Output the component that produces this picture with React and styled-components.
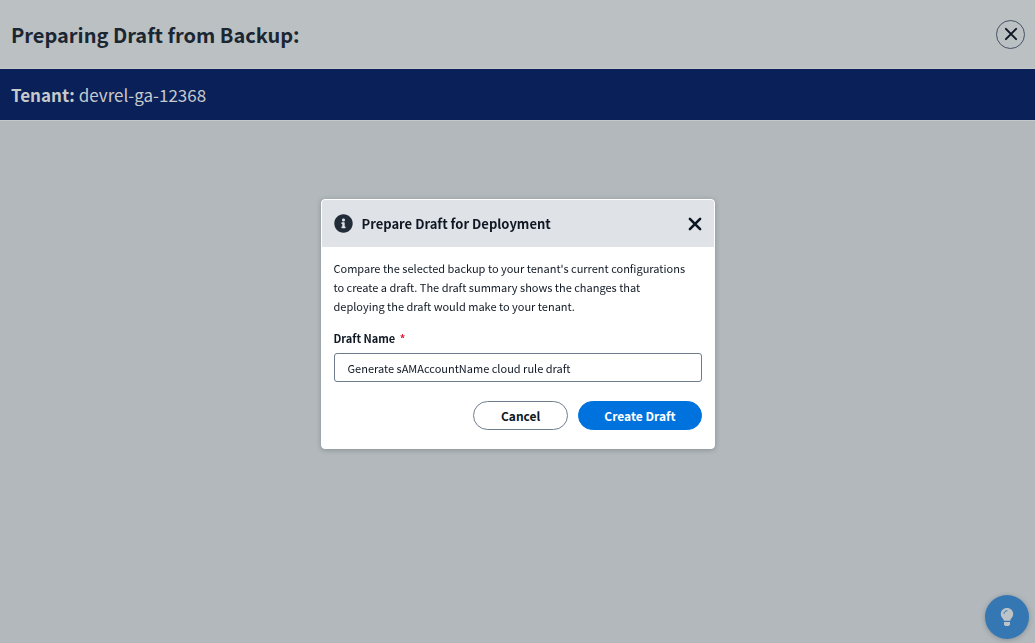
import React, { useState } from "react";
import styled, { createGlobalStyle } from "styled-components";
import { FaInfoCircle } from "react-icons/fa";

const __INK = "#0e1722";
const __NAVY = "#0a2058";
const __BLUE = "#0072de";
const __SLATE = "#6f7c8e";
const __PAGE = "#b2b8bb";
const __TOP = "#bbc0c3";

const GlobalStyle = createGlobalStyle`
  * {
    box-sizing: border-box;
  }
  body {
    margin: 0;
    background: ${__PAGE};
    color: ${__INK};
    font-family: "Noto Sans CJK SC", "Noto Sans", sans-serif;
    font-size: 11px;
  }
  button,
  input {
    font: inherit;
    color: inherit;
  }
`;

const TopBar = styled.header`
  display: flex;
  align-items: center;
  justify-content: space-between;
  height: 69px;
  padding: 0 10px 0 11px;
  background: ${__TOP};
  border-bottom: 1px solid #c4c8c8;
`;

const PageTitle = styled.h1`
  margin: 0;
  padding-top: 1px;
  font-size: 20px;
  line-height: 28px;
  font-weight: 700;
  color: #1a2632;
`;

const RoundButton = styled.button`
  display: flex;
  align-items: center;
  justify-content: center;
  width: 29px;
  height: 29px;
  padding: 0;
  border: 1px solid #465364;
  border-radius: 50%;
  background: transparent;
  cursor: pointer;
`;

const TenantBar = styled.div`
  display: flex;
  align-items: center;
  gap: 4px;
  height: 52px;
  padding: 1px 11px 0;
  background: ${__NAVY};
  border-bottom: 1px solid #c4c8c8;
  color: #c6cacb;
  font-size: 17px;
  line-height: 24px;
`;

const Overlay = styled.div`
  position: fixed;
  inset: 0;
  display: flex;
  align-items: center;
  justify-content: center;
  padding: 5px 16px 0;
`;

const Dialog = styled.section`
  width: 100%;
  max-width: 394px;
  overflow: hidden;
  border: 1px solid #ffffff;
  border-radius: 4px;
  background: #ffffff;
  box-shadow: 0 1px 5px rgba(40, 50, 60, 0.3);
`;

const DialogHeader = styled.div`
  display: flex;
  align-items: center;
  height: 47px;
  padding: 0 12px;
  background: #dfe2e7;
`;

const DialogTitle = styled.h2`
  flex: 1;
  margin: 0 0 0 9px;
  font-size: 13px;
  line-height: 20px;
  font-weight: 700;
`;

const IconButton = styled.button`
  display: flex;
  padding: 0;
  border: 0;
  background: transparent;
  cursor: pointer;
`;

const DialogForm = styled.form`
  padding: 12px 12px 18px;
`;

const Message = styled.p`
  margin: 0 0 13px;
  padding-right: 8px;
  line-height: 19px;
`;

const Label = styled.label`
  display: block;
  margin-bottom: 5px;
  line-height: 19px;
  font-weight: 700;
`;

const Required = styled.span`
  margin-left: 2px;
  color: #e0203a;
`;

const TextInput = styled.input`
  display: block;
  width: 100%;
  height: 29px;
  padding: 0 13px;
  border: 1px solid ${__SLATE};
  border-radius: 3px;
  background: #ffffff;
`;

const Actions = styled.div`
  display: flex;
  justify-content: flex-end;
  gap: 10px;
  margin-top: 19px;
`;

const PillButton = styled.button`
  height: 29px;
  padding: 0 ${props => (props.$primary ? 25 : 27)}px;
  border: 1px solid ${props => (props.$primary ? __BLUE : __SLATE)};
  border-radius: 15px;
  background: ${props => (props.$primary ? __BLUE : "#ffffff")};
  color: ${props => (props.$primary ? "#ffffff" : __INK)};
  font-size: 12px;
  font-weight: 700;
  cursor: pointer;
`;

const HelpButton = styled.button`
  position: fixed;
  right: 6px;
  bottom: 4px;
  display: flex;
  align-items: center;
  justify-content: center;
  width: 44px;
  height: 44px;
  padding: 0;
  border: 0;
  border-radius: 50%;
  background: #3477b3;
  box-shadow: 0 1px 5px rgba(40, 50, 60, 0.3);
  cursor: pointer;
`;

const Cross = ({ size, weight }) => (
  <svg width={size} height={size} viewBox="0 0 14 14" fill="none" aria-hidden="true">
    <path
      d="M1.9 1.9 12.1 12.1M12.1 1.9 1.9 12.1"
      stroke={__INK}
      strokeWidth={weight}
      strokeLinecap="round"
    />
  </svg>
);

const Bulb = () => (
  <svg width="14" height="20" viewBox="0 0 14 20" aria-hidden="true">
    <path
      d="M7 1C3.5 1 .8 3.6.8 7c0 1.7.7 2.9 1.6 4.1.8 1 1.2 1.7 1.4 2.7h6.4c.2-1 .6-1.7 1.4-2.7.9-1.2 1.6-2.4 1.6-4.1 0-3.4-2.7-6-6.2-6Z"
      fill="#bdc3c6"
    />
    <path d="M4 15h6v2.2L8.9 19H5.1L4 17.2Z" fill="#bdc3c6" />
    <path d="M4 6.5C4.1 4.8 5.3 3.8 7 3.7" fill="none" stroke="#3477b3" strokeLinecap="round" />
  </svg>
);

const DraftDialog = () => {
  const [name, setName] = useState("Generate sAMAccountName cloud rule draft");

  return (
    <Overlay>
      <Dialog role="dialog" aria-labelledby="dialog-title">
        <DialogHeader>
          <FaInfoCircle size={19} color="#222c38" />
          <DialogTitle id="dialog-title">Prepare Draft for Deployment</DialogTitle>
          <IconButton type="button" aria-label="Close dialog">
            <Cross size={14} weight={2.6} />
          </IconButton>
        </DialogHeader>
        <DialogForm onSubmit={e => e.preventDefault()}>
          <Message>
            Compare the selected backup to your tenant's current configurations to create a draft.
            The draft summary shows the changes that deploying the draft would make to your tenant.
          </Message>
          <Label htmlFor="draft-name">
            Draft Name <Required>*</Required>
          </Label>
          <TextInput
            id="draft-name"
            required
            value={name}
            onChange={e => setName(e.target.value)}
          />
          <Actions>
            <PillButton type="button">Cancel</PillButton>
            <PillButton type="submit" $primary>
              Create Draft
            </PillButton>
          </Actions>
        </DialogForm>
      </Dialog>
    </Overlay>
  );
};

const App = () => (
  <>
    <GlobalStyle />
    <TopBar>
      <PageTitle>Preparing Draft from Backup:</PageTitle>
      <RoundButton type="button" aria-label="Close">
        <Cross size={14} weight={2} />
      </RoundButton>
    </TopBar>
    <TenantBar>
      <strong>Tenant:</strong>
      <span>devrel-ga-12368</span>
    </TenantBar>
    <DraftDialog />
    <HelpButton type="button" aria-label="Tips">
      <Bulb />
    </HelpButton>
  </>
);

export default App;
